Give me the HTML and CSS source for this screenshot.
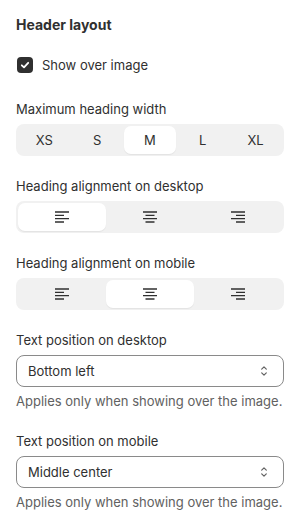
FILE: index.html
```html
<!DOCTYPE html>
<html lang="en">
<head>
<meta charset="utf-8">
<title>Header layout</title>
<link rel="stylesheet" href="styles.css">
</head>
<body>
<div class="panel">
  <h2 class="title">Header layout</h2>

  <label class="check">
    <span class="box"><svg width="16" height="16" viewBox="0 0 16 16"><path d="M4.8 8.3 L7 10.4 L11.2 5.8" fill="none" stroke="#fff" stroke-width="1.8" stroke-linecap="round" stroke-linejoin="round"/></svg></span>
    <span>Show over image</span>
  </label>

  <div class="field first">
    <div class="label">Maximum heading width</div>
    <div class="seg five">
      <div class="opt">XS</div>
      <div class="opt">S</div>
      <div class="opt on">M</div>
      <div class="opt">L</div>
      <div class="opt">XL</div>
    </div>
  </div>

  <div class="field">
    <div class="label">Heading alignment on desktop</div>
    <div class="seg three">
      <div class="opt on"><svg class="ico" viewBox="0 0 20 20"><path d="M3 5h14M3 8.33h9M3 11.67h14M3 15h9"/></svg></div>
      <div class="opt"><svg class="ico" viewBox="0 0 20 20"><path d="M3 5h14M5.5 8.33h9M3 11.67h14M5.5 15h9"/></svg></div>
      <div class="opt"><svg class="ico" viewBox="0 0 20 20"><path d="M3 5h14M8 8.33h9M3 11.67h14M8 15h9"/></svg></div>
    </div>
  </div>

  <div class="field">
    <div class="label">Heading alignment on mobile</div>
    <div class="seg three">
      <div class="opt"><svg class="ico" viewBox="0 0 20 20"><path d="M3 5h14M3 8.33h9M3 11.67h14M3 15h9"/></svg></div>
      <div class="opt on"><svg class="ico" viewBox="0 0 20 20"><path d="M3 5h14M5.5 8.33h9M3 11.67h14M5.5 15h9"/></svg></div>
      <div class="opt"><svg class="ico" viewBox="0 0 20 20"><path d="M3 5h14M8 8.33h9M3 11.67h14M8 15h9"/></svg></div>
    </div>
  </div>

  <div class="field">
    <div class="label">Text position on desktop</div>
    <div class="select">
      <span>Bottom left</span>
      <svg class="chev" viewBox="0 0 20 20"><path d="M7.7 8.2 L10 5.9 L12.3 8.2 M7.7 11.8 L10 14.1 L12.3 11.8"/></svg>
    </div>
    <div class="help">Applies only when showing over the image.</div>
  </div>

  <div class="field">
    <div class="label">Text position on mobile</div>
    <div class="select">
      <span>Middle center</span>
      <svg class="chev" viewBox="0 0 20 20"><path d="M7.7 8.2 L10 5.9 L12.3 8.2 M7.7 11.8 L10 14.1 L12.3 11.8"/></svg>
    </div>
    <div class="help">Applies only when showing over the image.</div>
  </div>
</div>
</body>
</html>
```

FILE: styles.css
```css
* { box-sizing: border-box; }
html, body { margin: 0; padding: 0; background: #fff; }
body {
  font-family: Inter, "Noto Sans", sans-serif;
  font-size: 13px;
  font-weight: 400;
  line-height: 20px;
  color: #303030;
}
.panel {
  padding: 15px 13px 0 16px;
  display: flex;
  flex-direction: column;
}
.title {
  margin: 0;
  font-size: 14px;
  font-weight: 650;
  line-height: 20px;
  color: #303030;
}
.check {
  margin-top: 20px;
  display: flex;
  align-items: center;
  gap: 9px;
  height: 20px;
}
.box {
  width: 16px;
  height: 16px;
  margin-left: 1px;
  border-radius: 4px;
  background: #303030;
  display: flex;
}
.field { margin-top: 20px; display: flex; flex-direction: column; }
.field.first { margin-top: 24px; }
.label { line-height: 20px; margin-bottom: 5px; }
.seg {
  display: grid;
  background: #f1f1f1;
  border-radius: 8px;
  padding: 2px;
  height: 32px;
}
.seg.five { grid-template-columns: repeat(5, 1fr); }
.seg.three { grid-template-columns: repeat(3, 1fr); }
.opt {
  display: flex;
  align-items: center;
  justify-content: center;
  border-radius: 7px;
  font-size: 13px;
  color: #303030;
}
.opt.on {
  background: #fff;
  box-shadow: 0 1px 1px rgba(0,0,0,0.06);
}
.ico {
  width: 20px;
  height: 20px;
  fill: none;
  stroke: #303030;
  stroke-width: 1.3;
}
.select {
  height: 32px;
  border: 1px solid #8a8a8a;
  border-radius: 8px;
  display: flex;
  align-items: center;
  justify-content: space-between;
  padding: 0 9px 0 11px;
  color: #303030;
}
.chev {
  width: 20px;
  height: 20px;
  fill: none;
  stroke: #616161;
  stroke-width: 1.2;
  stroke-linecap: round;
  stroke-linejoin: round;
}
.help {
  margin-top: 4px;
  color: #616161;
  line-height: 20px;
}
```
